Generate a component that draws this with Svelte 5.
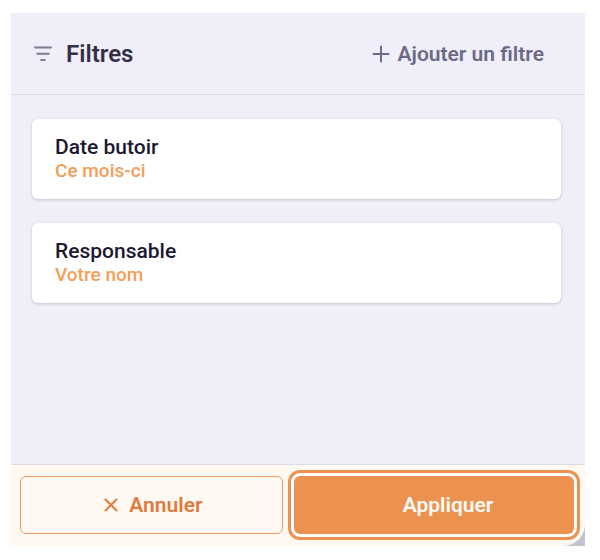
<script lang="ts">
    interface Filter {
        label: string;
        value: string;
    }

    let filters: Filter[] = [
        { label: "Date butoir", value: "Ce mois-ci" },
        { label: "Responsable", value: "Votre nom" }
    ];
</script>

<main class="page">
    <div class="frame">
        <section class="panel">
            <header class="header">
                <svg class="filter-icon" width="18" height="18" viewBox="0 0 18 18" aria-hidden="true">
                    <path d="M1 2.5H17M3.2 8.8H14.8M7.2 15H10.8" />
                </svg>
                <h1>Filtres</h1>
                <button class="add" type="button">
                    <svg width="18" height="18" viewBox="0 0 18 18" aria-hidden="true">
                        <path d="M9 1.5V16.5M1.5 9H16.5" />
                    </svg>
                    Ajouter un filtre
                </button>
            </header>

            <div class="filters">
                {#each filters as filter}
                    <button class="card" type="button">
                        <span class="label">{filter.label}</span>
                        <span class="value">{filter.value}</span>
                    </button>
                {/each}
            </div>

            <footer class="footer">
                <button class="cancel" type="button">
                    <svg width="14" height="14" viewBox="0 0 14 14" aria-hidden="true">
                        <path d="M1.5 1.5L12.5 12.5M12.5 1.5L1.5 12.5" />
                    </svg>
                    Annuler
                </button>
                <button class="apply" type="button">Appliquer</button>
            </footer>
        </section>
    </div>
</main>

<style>
    :global(body) { margin: 0; background: #ffffff; }

    .page {
        box-sizing: border-box;
        min-height: 100vh;
        display: flex;
        padding: 13px 15px 14px 11px;
        font-family: Roboto, "Noto Sans", sans-serif;
    }

    .frame { flex: 1; display: flex; background: #c3c3cd; }

    .panel {
        flex: 1;
        display: flex;
        flex-direction: column;
        background: #f0eef8;
        border-bottom-right-radius: 22px;
        overflow: hidden;
    }

    button { font-family: inherit; font-weight: 600; cursor: pointer; }
    svg { fill: none; stroke: currentColor; stroke-width: 2; stroke-linecap: round; }

    .header {
        display: flex;
        align-items: center;
        padding: 21px 41px 20px 23px;
        border-bottom: 1px solid #d8dae6;
        color: #6c6a87;
    }

    .filter-icon { stroke: #7d7b96; }

    h1 {
        margin: 0 auto 0 14px;
        font-size: 24px;
        line-height: 40px;
        font-weight: 600;
        color: #33304a;
    }

    .add {
        display: flex;
        align-items: center;
        gap: 8px;
        padding: 0;
        border: none;
        background: none;
        font-size: 21px;
        line-height: 24px;
        color: #6c6a87;
    }

    .filters {
        flex: 1;
        display: flex;
        flex-direction: column;
        gap: 24px;
        padding: 24px 24px 24px 21px;
    }

    .card {
        display: flex;
        flex-direction: column;
        padding: 17px 23px;
        border: none;
        border-radius: 6px;
        background: #ffffff;
        box-shadow: 0 1px 3px rgba(40, 35, 70, 0.22);
        font-weight: 500;
        line-height: 23px;
        text-align: left;
    }

    .label { font-size: 21px; color: #1c1930; }
    .value { font-size: 19px; color: #f29d58; }

    .footer {
        display: grid;
        grid-template-columns: 263fr 280fr;
        gap: 11px;
        padding: 11px 11px 12px 9px;
        border-top: 1px solid #dcdbe4;
        border-bottom-right-radius: 22px;
        background: #fff9f2;
    }

    .cancel,
    .apply {
        box-sizing: border-box;
        display: flex;
        align-items: center;
        justify-content: center;
        gap: 11px;
        height: 58px;
        border-radius: 6px;
        font-size: 21px;
    }

    .cancel {
        padding: 0 0 0 4px;
        border: 1px solid #eb9a66;
        background: #fff9f2;
        color: #e17a40;
    }

    .apply {
        padding: 0 0 0 28px;
        border: none;
        background: #ec9251;
        color: #fffaf4;
        box-shadow: 0 0 0 3px #ffffff, 0 0 0 6px #ec9251;
    }
</style>
